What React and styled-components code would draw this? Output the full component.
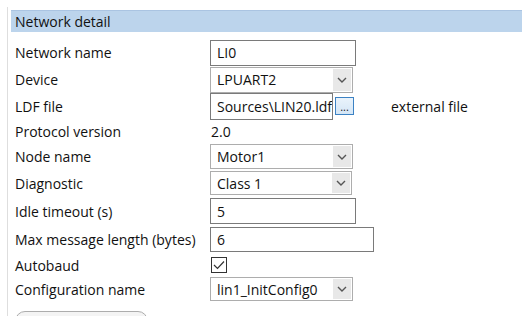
import React from "react";
import styled, { createGlobalStyle } from "styled-components";

const Global = createGlobalStyle`
  html, body { margin: 0; padding: 0; background: #ffffff; overflow: hidden; }
  body { font-family: "Open Sans", "Noto Sans", sans-serif; }
`;

const Page = styled.div`
  width: 522px;
  height: 316px;
  padding: 7px 0 0 7px;
  box-sizing: border-box;
  overflow: hidden;
`;

const Section = styled.div`
  border-left: 1px solid #dedede;
  height: 100%;
  padding: 3px 0 0 3px;
  box-sizing: border-box;
`;

const Header = styled.div`
  height: 22px;
  background: #bcd4ec;
  border-top: 1px solid #aac4e2;
  box-sizing: border-box;
  padding-left: 4px;
  display: flex;
  align-items: center;
  font-size: 14px;
  color: #111;
`;

const Form = styled.div`
  display: grid;
  grid-template-columns: 195px auto;
  padding: 7px 0 0 4px;
`;

const Label = styled.div`
  height: ${(p) => p.$h}px;
  display: flex;
  align-items: center;
  font-size: 14px;
  color: #111;
  white-space: nowrap;
`;

const Cell = styled.div`
  height: ${(p) => p.$h}px;
  display: flex;
  align-items: center;
  gap: 2px;
`;

const TextBox = styled.div`
  width: ${(p) => p.$w}px;
  height: ${(p) => p.$ch}px;
  border: 1px solid #7a7a7a;
  box-sizing: border-box;
  padding-left: 6px;
  display: flex;
  align-items: center;
  font-size: 14px;
  color: #111;
  white-space: nowrap;
  overflow: hidden;
  background: #fff;
`;

const SelectBox = styled.div`
  width: ${(p) => p.$w}px;
  height: ${(p) => p.$ch}px;
  border: 1px solid #adadad;
  box-sizing: border-box;
  padding: 0 1px 0 6px;
  display: flex;
  align-items: center;
  justify-content: space-between;
  font-size: 14px;
  color: #111;
  background: #fff;
`;

const Arrow = styled.div`
  width: 18px;
  height: calc(100% - 2px);
  background: #e8e8e8;
  display: flex;
  align-items: center;
  justify-content: center;
`;

const BrowseButton = styled.div`
  width: 19px;
  height: 18px;
  border: 1px solid #3c82c4;
  box-sizing: border-box;
  background: linear-gradient(#eaf3fb, #d4e6f6);
  display: flex;
  align-items: flex-end;
  justify-content: center;
  font-size: 11px;
  line-height: 11px;
  color: #222;
  padding-bottom: 2px;
`;

const Note = styled.span`
  font-size: 14px;
  color: #111;
  margin-left: 35px;
`;

const Plain = styled.span`
  font-size: 14px;
  color: #111;
  padding-left: 1px;
`;

const Check = styled.div`
  width: 16px;
  height: 16px;
  border: 1px solid #333;
  box-sizing: border-box;
  margin-left: 1px;
  display: flex;
  align-items: center;
  justify-content: center;
  background: #fff;
`;

const Footer = styled.div`
  margin: 10px 0 0 4px;
  width: 133px;
  height: 20px;
  border: 1px solid #adadad;
  border-radius: 10px 10px 0 0;
  background: #f4f4f4;
  box-sizing: border-box;
`;

const Chevron = () => (
  <svg width="10" height="6" viewBox="0 0 10 6">
    <path d="M1 1 L5 5 L9 1" fill="none" stroke="#555" strokeWidth="1.4" />
  </svg>
);

const Tick = () => (
  <svg width="12" height="10" viewBox="0 0 12 10">
    <path d="M1 5 L4.5 8.5 L11 1.5" fill="none" stroke="#333" strokeWidth="1.2" />
  </svg>
);

const rows = [
  { label: "Network name", h: 27, kind: "text", value: "LI0", w: 146, ch: 26 },
  { label: "Device", h: 27, kind: "select", value: "LPUART2", w: 143, ch: 26 },
  { label: "LDF file", h: 26, kind: "file", value: "Sources\\LIN20.ldf", w: 123, ch: 27 },
  { label: "Protocol version", h: 25, kind: "plain", value: "2.0" },
  { label: "Node name", h: 25, kind: "select", value: "Motor1", w: 143, ch: 25 },
  { label: "Diagnostic", h: 28, kind: "select", value: "Class 1", w: 142, ch: 24 },
  { label: "Idle timeout (s)", h: 28, kind: "text", value: "5", w: 146, ch: 26 },
  { label: "Max message length (bytes)", h: 28, kind: "text", value: "6", w: 164, ch: 25 },
  { label: "Autobaud", h: 24, kind: "check" },
  { label: "Configuration name", h: 24, kind: "select", value: "lin1_InitConfig0", w: 143, ch: 24 },
];

function Control({ r }) {
  switch (r.kind) {
    case "text":
      return <TextBox $w={r.w} $ch={r.ch}>{r.value}</TextBox>;
    case "select":
      return (
        <SelectBox $w={r.w} $ch={r.ch}>
          <span>{r.value}</span>
          <Arrow><Chevron /></Arrow>
        </SelectBox>
      );
    case "file":
      return (
        <>
          <TextBox $w={r.w} $ch={r.ch}>{r.value}</TextBox>
          <BrowseButton>...</BrowseButton>
          <Note>external file</Note>
        </>
      );
    case "check":
      return <Check><Tick /></Check>;
    default:
      return <Plain>{r.value}</Plain>;
  }
}

export default function App() {
  return (
    <Page>
      <Global />
      <Section>
        <Header>Network detail</Header>
        <Form>
          {rows.map((r) => (
            <React.Fragment key={r.label}>
              <Label $h={r.h}>{r.label}</Label>
              <Cell $h={r.h}><Control r={r} /></Cell>
            </React.Fragment>
          ))}
        </Form>
        <Footer />
      </Section>
    </Page>
  );
}
